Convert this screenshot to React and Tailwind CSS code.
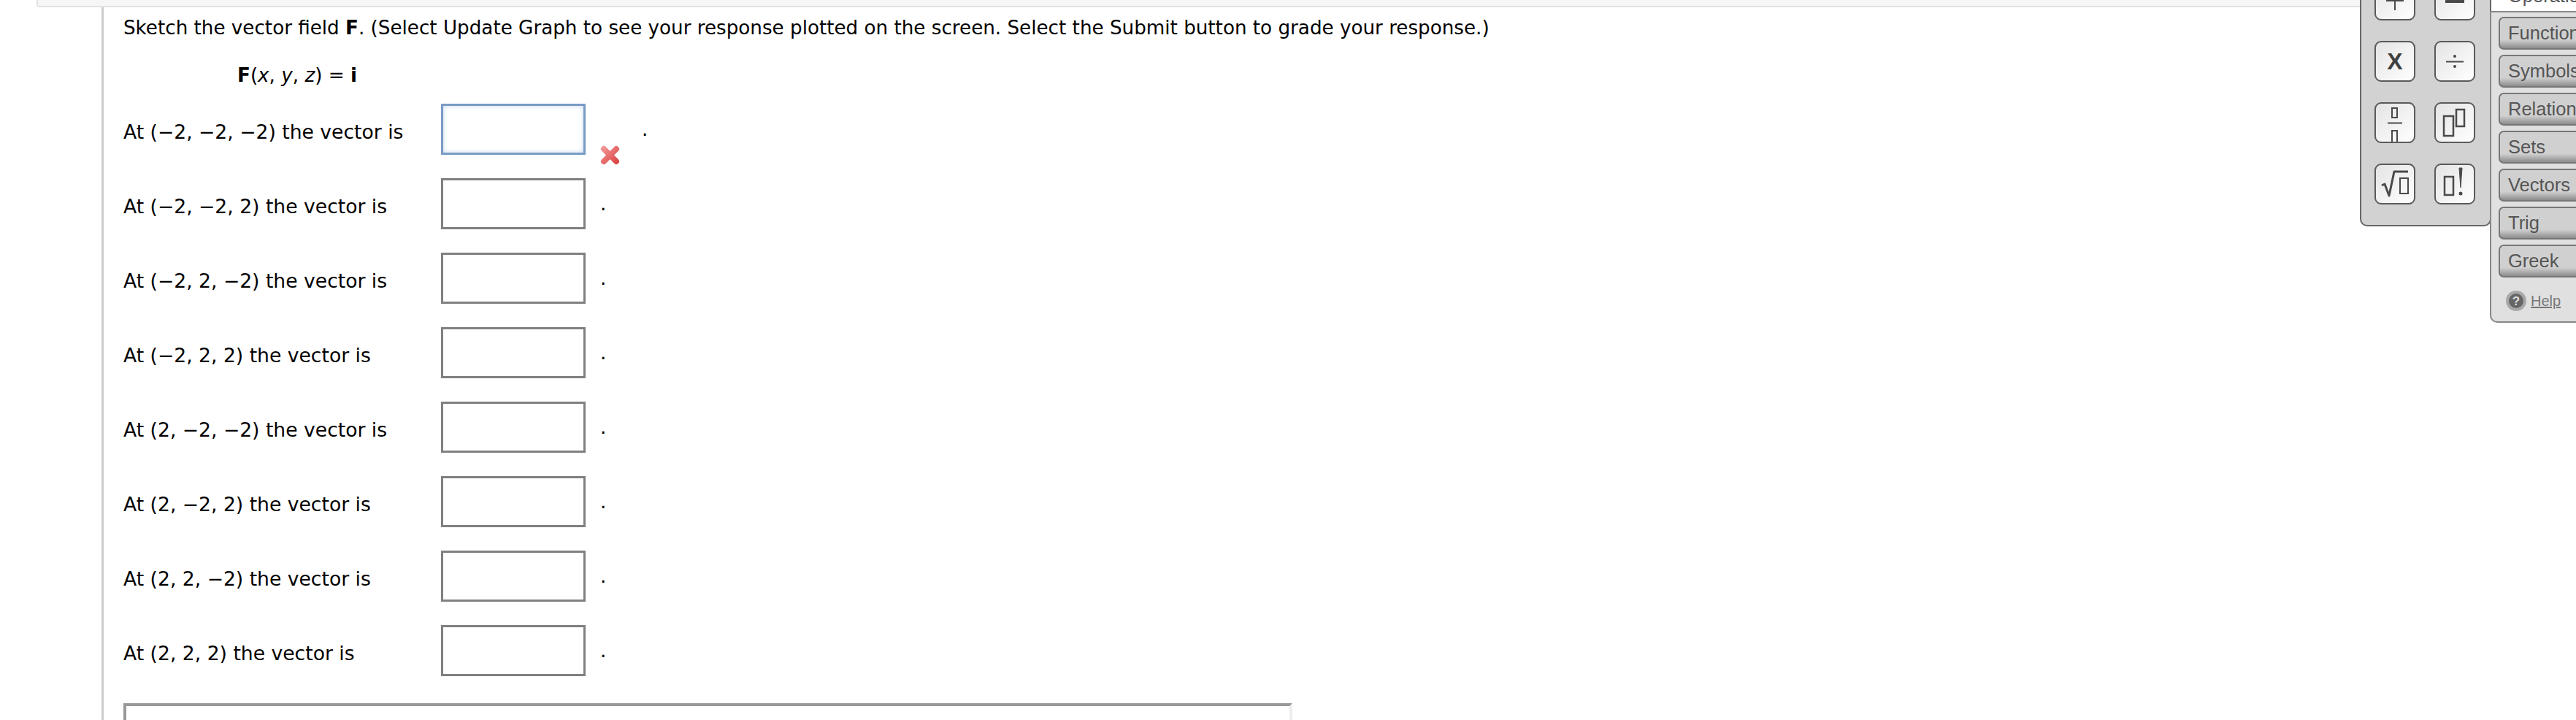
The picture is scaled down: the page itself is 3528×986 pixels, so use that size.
const rows = [
  "At (−2, −2, −2) the vector is",
  "At (−2, −2, 2) the vector is",
  "At (−2, 2, −2) the vector is",
  "At (−2, 2, 2) the vector is",
  "At (2, −2, −2) the vector is",
  "At (2, −2, 2) the vector is",
  "At (2, 2, −2) the vector is",
  "At (2, 2, 2) the vector is",
];

const tabs = ["Functions", "Symbols", "Relations", "Sets", "Vectors", "Trig", "Greek"];

function WrongMark() {
  return (
    <svg viewBox="0 0 27 27" className="w-[27px] h-[27px] shrink-0">
      <defs>
        <linearGradient id="wrong" x1="0" y1="0" x2="1" y2="1">
          <stop offset="0" stopColor="#f29090" />
          <stop offset="1" stopColor="#dc4a4a" />
        </linearGradient>
      </defs>
      <path d="M5 5 L22 22 M22 5 L5 22" stroke="url(#wrong)" strokeWidth="8" strokeLinecap="round" />
    </svg>
  );
}

function Row({ label, active }) {
  return (
    <div className="flex items-start h-[70px]">
      <span className="w-[435px] shrink-0 leading-[70px] mt-[4px] text-[26.6px]">{label}</span>
      <div
        className={
          active
            ? "w-[198px] h-[70px] shrink-0 border-[3px] border-[#7a9cc4] shadow-[inset_0_0_6px_#c4d6ee]"
            : "w-[198px] h-[70px] shrink-0 border-[3px] border-[#808080]"
        }
      />
      {active ? (
        <>
          <div className="ml-[20px] mt-[57px]">
            <WrongMark />
          </div>
          <span className="ml-[30px] leading-[70px]">.</span>
        </>
      ) : (
        <span className="ml-[20px] leading-[70px]">.</span>
      )}
    </div>
  );
}

function KeyButton({ children }) {
  return (
    <div className="w-[56px] h-[56px] rounded-[9px] border-2 border-[#5a5a5a] bg-gradient-to-br from-[#e4e4e4] to-[#ffffff] flex items-center justify-center overflow-hidden">
      {children}
    </div>
  );
}

function Icon({ children }) {
  return (
    <svg viewBox="0 0 56 56" className="w-[56px] h-[56px] shrink-0" fill="none" stroke="#4a4a4a">
      {children}
    </svg>
  );
}

function Keypad() {
  return (
    <div className="w-[180px] h-[310px] shrink-0 bg-[#d2d2d2] border-x-2 border-b-2 border-[#666666] rounded-b-[10px] overflow-hidden pl-[18px]">
      <div className="grid grid-cols-[56px_56px] gap-x-[26px] gap-y-[28px] -mt-[28px]">
        <KeyButton>
          <Icon>
            <path d="M28 14 V42 M16 29 H40" strokeWidth="2" />
          </Icon>
        </KeyButton>
        <KeyButton>
          <Icon>
            <path d="M15 30 H41" strokeWidth="4" />
          </Icon>
        </KeyButton>
        <KeyButton>
          <span className="font-['Liberation_Sans',sans-serif] font-bold text-[32px] leading-none text-[#404040]">X</span>
        </KeyButton>
        <KeyButton>
          <Icon>
            <path d="M16 28.5 H40" strokeWidth="2" />
            <circle cx="28" cy="21" r="2" fill="#4a4a4a" stroke="none" />
            <circle cx="28" cy="35" r="2" fill="#4a4a4a" stroke="none" />
          </Icon>
        </KeyButton>
        <KeyButton>
          <Icon>
            <rect x="24" y="8" width="7" height="13" strokeWidth="2" />
            <path d="M18 28.5 H38" strokeWidth="2" />
            <rect x="24" y="39" width="7" height="16" strokeWidth="2" />
          </Icon>
        </KeyButton>
        <KeyButton>
          <Icon>
            <rect x="13" y="19" width="13" height="27" strokeWidth="2.5" />
            <rect x="30" y="10" width="11" height="23" strokeWidth="2.5" />
          </Icon>
        </KeyButton>
        <KeyButton>
          <Icon>
            <path d="M10 30 L14 28 L20 44 L27 11 H46" strokeWidth="3" strokeLinejoin="round" />
            <rect x="35" y="20" width="11" height="21" strokeWidth="2" />
          </Icon>
        </KeyButton>
        <KeyButton>
          <Icon>
            <rect x="14" y="18" width="12" height="25" strokeWidth="2.5" />
            <path d="M34 6 L36 33 L38 6 Z" fill="#4a4a4a" strokeWidth="1" strokeLinejoin="round" />
            <circle cx="36" cy="41" r="2.5" fill="#4a4a4a" stroke="none" />
          </Icon>
        </KeyButton>
      </div>
    </div>
  );
}

function HelpIcon() {
  return (
    <svg viewBox="0 0 28 28" className="w-[28px] h-[28px] shrink-0">
      <circle cx="14" cy="14" r="14" fill="#a8a8a8" />
      <circle cx="14" cy="14" r="10" fill="#666666" />
      <text x="14" y="20" textAnchor="middle" fontSize="17" fontWeight="700" fill="#dddddd" fontFamily="Liberation Sans, sans-serif">?</text>
    </svg>
  );
}

function Palette() {
  return (
    <div className="w-[118px] shrink-0 font-['Liberation_Sans',sans-serif] text-[25.5px] text-[#555555]">
      <div className="h-[15px] pl-[25px] leading-[15px] overflow-hidden">
        <span className="block -mt-[13px] whitespace-nowrap">Operations</span>
      </div>
      <div className="h-[427px] bg-[#e0e0e0] border-l-2 border-t-2 border-b-2 border-[#888888] rounded-bl-[10px] pl-[10px] pt-[6px]">
        <div className="flex flex-col gap-[7px]">
          {tabs.map((t) => (
            <div
              key={t}
              className="h-[45px] pl-[11px] pt-[3px] leading-[34px] whitespace-nowrap overflow-hidden border-2 border-r-0 border-[#777777] rounded-l-[7px] bg-[linear-gradient(#d0d0d0_0,#d0d0d0_72%,#8c8c8c_100%)]"
            >
              {t}
            </div>
          ))}
        </div>
        <div className="flex items-center gap-[6px] mt-[17px] pl-[10px] text-[20px] text-[#777777]">
          <HelpIcon />
          <span className="underline">Help</span>
        </div>
      </div>
    </div>
  );
}

export default function App() {
  return (
    <div className="relative w-[3528px] h-[986px] overflow-hidden bg-white text-black font-['DejaVu_Sans',sans-serif] text-[26.2px]">
      <div className="ml-[50px] w-[3200px] h-[10px] bg-[#f6f6f6] border-x-2 border-b-2 border-[#e2e2e2] rounded-bl-[4px]" />
      <div className="ml-[139px] h-[976px] border-l-[3px] border-[#cccccc] pl-[27px] flex flex-col">
        <p className="leading-[40px] mt-[8px] whitespace-nowrap">
          Sketch the vector field <b>F</b>. (Select Update Graph to see your response plotted on the screen. Select the Submit button to grade your response.)
        </p>
        <p className="leading-[40px] mt-[25px] ml-[156px] whitespace-nowrap">
          <b>F</b>(<i>x</i>, <i>y</i>, <i>z</i>) = <b>i</b>
        </p>
        <div className="flex flex-col gap-[32px] mt-[19px]">
          {rows.map((r, i) => (
            <Row key={r} label={r} active={i === 0} />
          ))}
        </div>
        <div className="w-[1601px] h-[40px] mt-[37px] shrink-0 border-4 border-b-0 border-t-[#999999] border-l-[#999999] border-r-[#eeeeee]" />
      </div>
      <div className="absolute top-0 left-[3232px] flex items-start">
        <Keypad />
        <div className="-ml-[2px]">
          <Palette />
        </div>
      </div>
    </div>
  );
}
